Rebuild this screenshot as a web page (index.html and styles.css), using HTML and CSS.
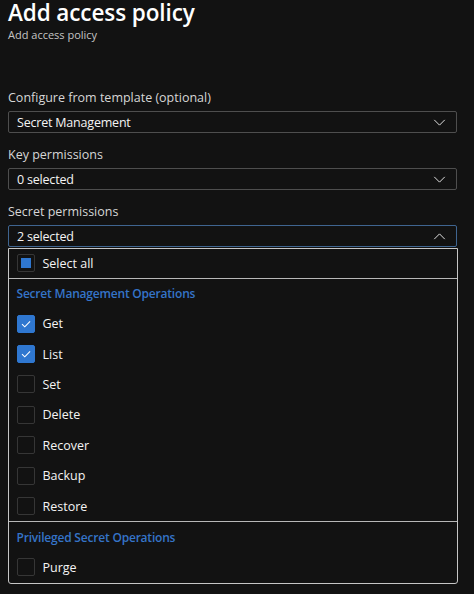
FILE: index.html
```html
<!DOCTYPE html>
<html lang="en">
<head>
<meta charset="utf-8">
<title>Add access policy</title>
<link rel="stylesheet" href="styles.css">
</head>
<body>
<div class="page">
  <h1 class="title">Add access policy</h1>
  <div class="subtitle">Add access policy</div>

  <div class="field first">
    <div class="label">Configure from template (optional)</div>
    <div class="select">
      <span>Secret Management</span>
      <svg class="chev" viewBox="0 0 14 8"><path d="M1 1 L7 7 L13 1"/></svg>
    </div>
  </div>

  <div class="field">
    <div class="label">Key permissions</div>
    <div class="select">
      <span>0 selected</span>
      <svg class="chev" viewBox="0 0 14 8"><path d="M1 1 L7 7 L13 1"/></svg>
    </div>
  </div>

  <div class="field">
    <div class="label">Secret permissions</div>
    <div class="select active">
      <span>2 selected</span>
      <svg class="chev" viewBox="0 0 14 8"><path d="M1 7 L7 1 L13 7"/></svg>
    </div>
  </div>

  <div class="panel">
    <div class="row selectall">
      <span class="box partial"><span class="dot"></span></span>
      <span class="text">Select all</span>
    </div>
    <div class="section">
      <div class="header">Secret Management Operations</div>
      <div class="row"><span class="box checked"><svg viewBox="0 0 18 18"><path d="M4.5 9.2 L7.6 12.2 L13.6 6"/></svg></span><span class="text">Get</span></div>
      <div class="row"><span class="box checked"><svg viewBox="0 0 18 18"><path d="M4.5 9.2 L7.6 12.2 L13.6 6"/></svg></span><span class="text">List</span></div>
      <div class="row"><span class="box"></span><span class="text">Set</span></div>
      <div class="row"><span class="box"></span><span class="text">Delete</span></div>
      <div class="row"><span class="box"></span><span class="text">Recover</span></div>
      <div class="row"><span class="box"></span><span class="text">Backup</span></div>
      <div class="row"><span class="box"></span><span class="text">Restore</span></div>
    </div>
    <div class="section">
      <div class="header">Privileged Secret Operations</div>
      <div class="row"><span class="box"></span><span class="text">Purge</span></div>
    </div>
  </div>
</div>
</body>
</html>
```
FILE: styles.css
```css
html, body {
  margin: 0;
  padding: 0;
  background: #121212;
}
body {
  font-family: "Open Sans", "Noto Sans", sans-serif;
  color: #f2f2f2;
}
.page {
  padding: 0 17px 0 8px;
}
.title {
  margin: 0;
  font-size: 22.5px;
  font-weight: 600;
  line-height: 26px;
  color: #ffffff;
  letter-spacing: -0.1px;
}
.subtitle {
  font-size: 11px;
  line-height: 16px;
  color: #c4c4c4;
  margin-top: 1px;
}
.field {
  margin-top: 13px;
}
.field.first {
  margin-top: 46px;
}
.label {
  font-size: 12.5px;
  line-height: 18px;
  color: #d6d6d6;
  margin-bottom: 4px;
}
.select {
  height: 22px;
  box-sizing: border-box;
  border: 1px solid #4e4e4e;
  border-radius: 2px;
  display: flex;
  align-items: center;
  justify-content: space-between;
  padding: 0 10px 0 8px;
  font-size: 12.5px;
  letter-spacing: -0.2px;
  color: #f4f4f4;
}
.select.active {
  border-color: #3f6590;
}
.chev {
  width: 13px;
  height: 7px;
  fill: none;
  stroke: #e8e8e8;
  stroke-width: 1.1;
}
.panel {
  margin-top: 1px;
  margin-right: -1px;
  border: 1.5px solid #c6c6c6;
  border-radius: 0 0 3px 3px;
  background: #121212;
}
.row {
  height: 30.4px;
  display: flex;
  align-items: center;
  padding-left: 7.5px;
  gap: 8px;
  font-size: 12.5px;
  color: #f4f4f4;
}
.row.selectall {
  height: 28.5px;
}
.section {
  border-top: 1.5px solid #b8b8b8;
}
.header {
  height: 30px;
  display: flex;
  align-items: center;
  padding-left: 7.5px;
  font-size: 12px;
  font-weight: 600;
  letter-spacing: -0.2px;
  color: #3574c8;
}
.box {
  width: 18px;
  height: 18px;
  box-sizing: border-box;
  border: 1px solid #363636;
  border-radius: 2px;
  display: flex;
  align-items: center;
  justify-content: center;
  flex: none;
}
.box.checked {
  background: #2f77d0;
  border-color: #2f77d0;
}
.box svg {
  width: 18px;
  height: 18px;
  fill: none;
  stroke: #ffffff;
  stroke-width: 1.2;
}
.box .dot {
  width: 10px;
  height: 10px;
  background: #2f77d0;
}
```
